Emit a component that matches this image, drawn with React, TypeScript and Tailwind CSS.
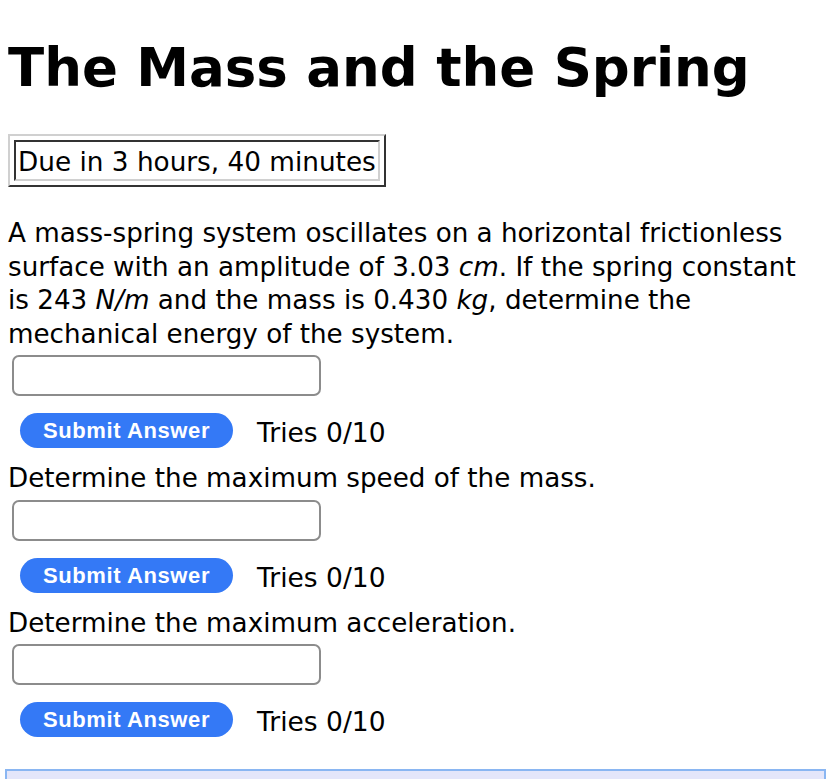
import React from "react";

function AnswerBlock() {
  return (
    <>
      <div className="mt-[4px] ml-[4px]">
        <div className="w-[309px] h-[41px] rounded-[7px] border-2 border-[#8c8c8c] bg-white" />
      </div>
      <div className="mt-[17px] ml-[12px] h-[35px] flex items-start gap-[24px]">
        <button className="w-[213px] h-[35px] rounded-full bg-[#3479f6] text-white font-bold text-[22px] tracking-[0.6px] flex items-center justify-center" style={{ fontFamily: '"Liberation Sans", Arial, sans-serif' }}>
          Submit Answer
        </button>
        <span className="text-[26.5px] leading-[39px] text-black whitespace-nowrap">Tries 0/10</span>
      </div>
    </>
  );
}

export default function App() {
  return (
    <div className="min-h-[779px] bg-white text-black pl-[8px] pr-[2px] overflow-hidden" style={{ fontFamily: '"DejaVu Sans", Verdana, sans-serif' }}>
      <h1 className="pt-[38px] text-[53px] leading-[60px] font-bold whitespace-nowrap">The Mass and the Spring</h1>
      <div className="mt-[36px] inline-block border-2 border-t-[#d0d0d0] border-l-[#d0d0d0] border-r-[#333] border-b-[#333] p-[4px]">
        <span className="block border-2 border-t-[#333] border-l-[#333] border-r-[#d0d0d0] border-b-[#d0d0d0] px-[2px] pt-[3px] pb-0 text-[26.3px] leading-[34px] whitespace-nowrap">
          Due in 3 hours, 40 minutes
        </span>
      </div>
      <p className="mt-[30px] w-[800px] text-[26.2px] leading-[33.5px]">
        A mass-spring system oscillates on a horizontal frictionless surface with an amplitude of 3.03 <i>cm</i>. If the spring constant is 243 <i>N/m</i> and the mass is 0.430 <i>kg</i>, determine the mechanical energy of the system.
      </p>
      <AnswerBlock />
      <p className="mt-[14px] text-[26.2px] leading-[33.5px]">Determine the maximum speed of the mass.</p>
      <AnswerBlock />
      <p className="mt-[14px] text-[26.2px] leading-[33.5px]">Determine the maximum acceleration.</p>
      <AnswerBlock />
      <div className="mt-[32px] -ml-[3px] h-[60px] border-2 border-[#8ab6f2] bg-[#e4e6fa]" />
    </div>
  );
}
